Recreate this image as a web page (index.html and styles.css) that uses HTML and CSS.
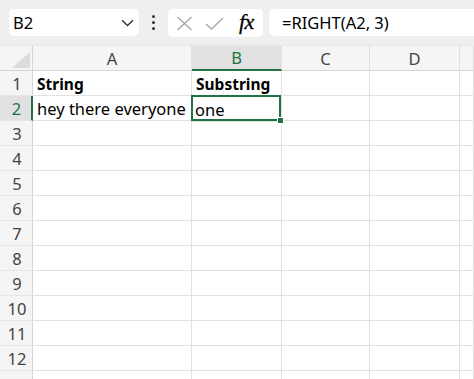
FILE: index.html
```html
<!DOCTYPE html>
<html>
<head>
<meta charset="utf-8">
<link rel="stylesheet" href="styles.css">
</head>
<body>
<div class="app">
  <div class="topbar">
    <div class="namebox">
      <span class="ref">B2</span>
      <svg class="chev" width="13" height="8" viewBox="0 0 13 8"><path d="M1 1.2 L6.5 6.5 L12 1.2" fill="none" stroke="#333" stroke-width="1.4"/></svg>
    </div>
    <div class="dots"><i></i><i></i><i></i></div>
    <div class="fbuttons">
      <svg class="ico" width="17" height="15" viewBox="0 0 17 15"><path d="M1.5 1 L15.5 14 M15.5 1 L1.5 14" stroke="#a6a6a6" stroke-width="1.3" fill="none"/></svg>
      <svg class="ico" width="19" height="13" viewBox="0 0 19 13"><path d="M1 7 L6.5 12 L18 1" stroke="#a6a6a6" stroke-width="1.3" fill="none"/></svg>
      <span class="fx">fx</span>
    </div>
    <div class="formula">=RIGHT(A2, 3)</div>
  </div>
  <div class="sheet">
    <div class="corner"><svg width="18" height="16" viewBox="0 0 18 16"><path d="M18 0 L18 16 L0 16 Z" fill="#dcdcdc"/></svg></div>
    <div class="ch">A</div>
    <div class="ch sel">B</div>
    <div class="ch">C</div>
    <div class="ch">D</div>
    <div class="ch last"></div>

    <div class="rh">1</div>
    <div class="c b">String</div>
    <div class="c b">Substring</div>
    <div class="c"></div><div class="c"></div><div class="c last"></div>

    <div class="rh sel">2</div>
    <div class="c">hey there everyone</div>
    <div class="c active">one</div>
    <div class="c"></div><div class="c"></div><div class="c last"></div>

    <div class="rh">3</div><div class="c"></div><div class="c"></div><div class="c"></div><div class="c"></div><div class="c last"></div>
    <div class="rh">4</div><div class="c"></div><div class="c"></div><div class="c"></div><div class="c"></div><div class="c last"></div>
    <div class="rh">5</div><div class="c"></div><div class="c"></div><div class="c"></div><div class="c"></div><div class="c last"></div>
    <div class="rh">6</div><div class="c"></div><div class="c"></div><div class="c"></div><div class="c"></div><div class="c last"></div>
    <div class="rh">7</div><div class="c"></div><div class="c"></div><div class="c"></div><div class="c"></div><div class="c last"></div>
    <div class="rh">8</div><div class="c"></div><div class="c"></div><div class="c"></div><div class="c"></div><div class="c last"></div>
    <div class="rh">9</div><div class="c"></div><div class="c"></div><div class="c"></div><div class="c"></div><div class="c last"></div>
    <div class="rh">10</div><div class="c"></div><div class="c"></div><div class="c"></div><div class="c"></div><div class="c last"></div>
    <div class="rh">11</div><div class="c"></div><div class="c"></div><div class="c"></div><div class="c"></div><div class="c last"></div>
    <div class="rh">12</div><div class="c"></div><div class="c"></div><div class="c"></div><div class="c"></div><div class="c last"></div>
    <div class="rh"></div><div class="c"></div><div class="c"></div><div class="c"></div><div class="c"></div><div class="c last"></div>
  </div>
</div>
</body>
</html>
```

FILE: styles.css
```css
html, body {
  margin: 0;
  padding: 0;
  width: 474px;
  height: 379px;
  overflow: hidden;
  background: #ffffff;
}
.app {
  font-family: "Noto Sans", "Open Sans", sans-serif;
  color: #000;
}
.topbar {
  height: 46px;
  box-sizing: border-box;
  background: #efefef;
  display: flex;
  align-items: flex-start;
  padding: 9px 0 0 9px;
  border-bottom: 1px solid #e6e6e6;
}
.namebox {
  width: 130px;
  height: 27px;
  box-sizing: border-box;
  background: #fff;
  border-radius: 5px;
  display: flex;
  align-items: center;
  justify-content: space-between;
  padding: 0 5px 0 4px;
}
.ref {
  font-size: 16.5px;
}
.chev { display: block; margin-top: 1px; }
.dots {
  width: 29px;
  height: 27px;
  display: flex;
  flex-direction: column;
  align-items: center;
  justify-content: center;
  gap: 3px;
}
.dots i {
  display: block;
  width: 3px;
  height: 3px;
  border-radius: 50%;
  background: #333;
}
.fbuttons {
  width: 95px;
  height: 28px;
  box-sizing: border-box;
  background: #fff;
  border-radius: 5px;
  display: flex;
  align-items: center;
  padding: 0 0 0 8px;
  gap: 12px;
}
.ico { display: block; }
.fx {
  font-family: "Liberation Serif", "DejaVu Serif", serif;
  font-style: italic;
  font-size: 22px;
  line-height: 1;
  margin-left: 3px;
  margin-top: -2px;
  letter-spacing: -0.5px;
  -webkit-text-stroke: 0.3px #000;
}
.formula {
  flex: 1;
  margin-left: 6px;
  height: 27px;
  background: #fff;
  border-radius: 5px 0 0 5px;
  font-size: 16.5px;
  line-height: 27px;
  padding-left: 13px;
  white-space: nowrap;
}
.sheet {
  display: grid;
  grid-template-columns: 33px 159px 90px 88px 90px 1fr;
  grid-template-rows: repeat(14, 25px);
  font-size: 16.5px;
}
.sheet > div {
  box-sizing: border-box;
  position: relative;
}
.corner {
  background: #f5f5f5;
  border-right: 1px solid #d6d6d6;
  border-bottom: 1px solid #d6d6d6;
  display: flex;
  align-items: flex-end;
  justify-content: flex-end;
  padding: 0 2px 2px 0;
}
.corner svg { display: block; }
.ch {
  background: #f5f5f5;
  border-right: 1px solid #e0e0e0;
  border-bottom: 1px solid #d6d6d6;
  display: flex;
  align-items: center;
  justify-content: center;
  color: #444;
  font-size: 16.5px;
}
.ch.sel {
  background: #e1e1e1;
  color: #217346;
  border-bottom: 2px solid #217346;
}
.rh {
  background: #f5f5f5;
  border-right: 1px solid #d6d6d6;
  border-bottom: 1px solid #e6e6e6;
  display: flex;
  align-items: center;
  justify-content: center;
  color: #444;
  font-size: 16.5px;
  padding-left: 2px;
}
.rh.sel {
  background: #e1e1e1;
  color: #217346;
  border-right: 2px solid #217346;
}
.c {
  border-right: 1px solid #e1e1e1;
  border-bottom: 1px solid #e1e1e1;
  padding: 0 0 0 4px;
  display: flex;
  align-items: flex-end;
  line-height: 23px;
  white-space: nowrap;
}
.c.b { font-weight: bold; font-size: 15.5px; line-height: 22px; }
.c.active {
  box-shadow: inset 0 0 0 2px #217346;
  margin: -1px 0 -1px -1px;
  padding-left: 4px;
}
.c.active::after {
  content: "";
  position: absolute;
  right: -3px;
  bottom: -3px;
  width: 5px;
  height: 5px;
  background: #217346;
  border: 1px solid #fff;
  z-index: 2;
}
```
